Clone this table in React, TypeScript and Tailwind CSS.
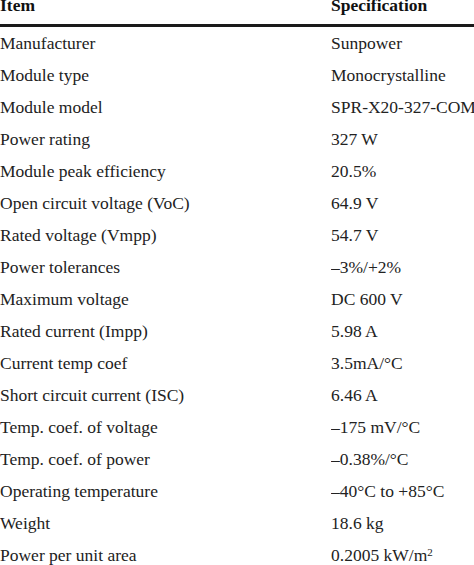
const rows: [string, React.ReactNode][] = [
  ['Manufacturer', 'Sunpower'],
  ['Module type', 'Monocrystalline'],
  ['Module model', 'SPR-X20-327-COM'],
  ['Power rating', '327 W'],
  ['Module peak efficiency', '20.5%'],
  ['Open circuit voltage (VoC)', '64.9 V'],
  ['Rated voltage (Vmpp)', '54.7 V'],
  ['Power tolerances', '–3%/+2%'],
  ['Maximum voltage', 'DC 600 V'],
  ['Rated current (Impp)', '5.98 A'],
  ['Current temp coef', '3.5mA/°C'],
  ['Short circuit current (ISC)', '6.46 A'],
  ['Temp. coef. of voltage', '–175 mV/°C'],
  ['Temp. coef. of power', '–0.38%/°C'],
  ['Operating temperature', '–40°C to +85°C'],
  ['Weight', '18.6 kg'],
  [
    'Power per unit area',
    <>
      0.2005 kW/m<sup className="text-[11px]">2</sup>
    </>,
  ],
];

export default function App() {
  return (
    <div className="w-[474px] h-[565px] overflow-hidden bg-white text-[#222] font-['Liberation_Serif',serif] text-[17.5px]">
      <div className="h-[24px] grid grid-cols-[331px_1fr] border-b-[3px] border-[#1a1a1a] box-content">
        <div className="font-bold text-[#111] leading-[18px] -mt-[4px]">Item</div>
        <div className="font-bold text-[#111] leading-[18px] -mt-[4px]">Specification</div>
      </div>
      {rows.map(([item, spec]) => (
        <div key={item} className="grid grid-cols-[331px_1fr] h-[32px] leading-[32px] whitespace-nowrap">
          <div>{item}</div>
          <div className="overflow-hidden">{spec}</div>
        </div>
      ))}
    </div>
  );
}
